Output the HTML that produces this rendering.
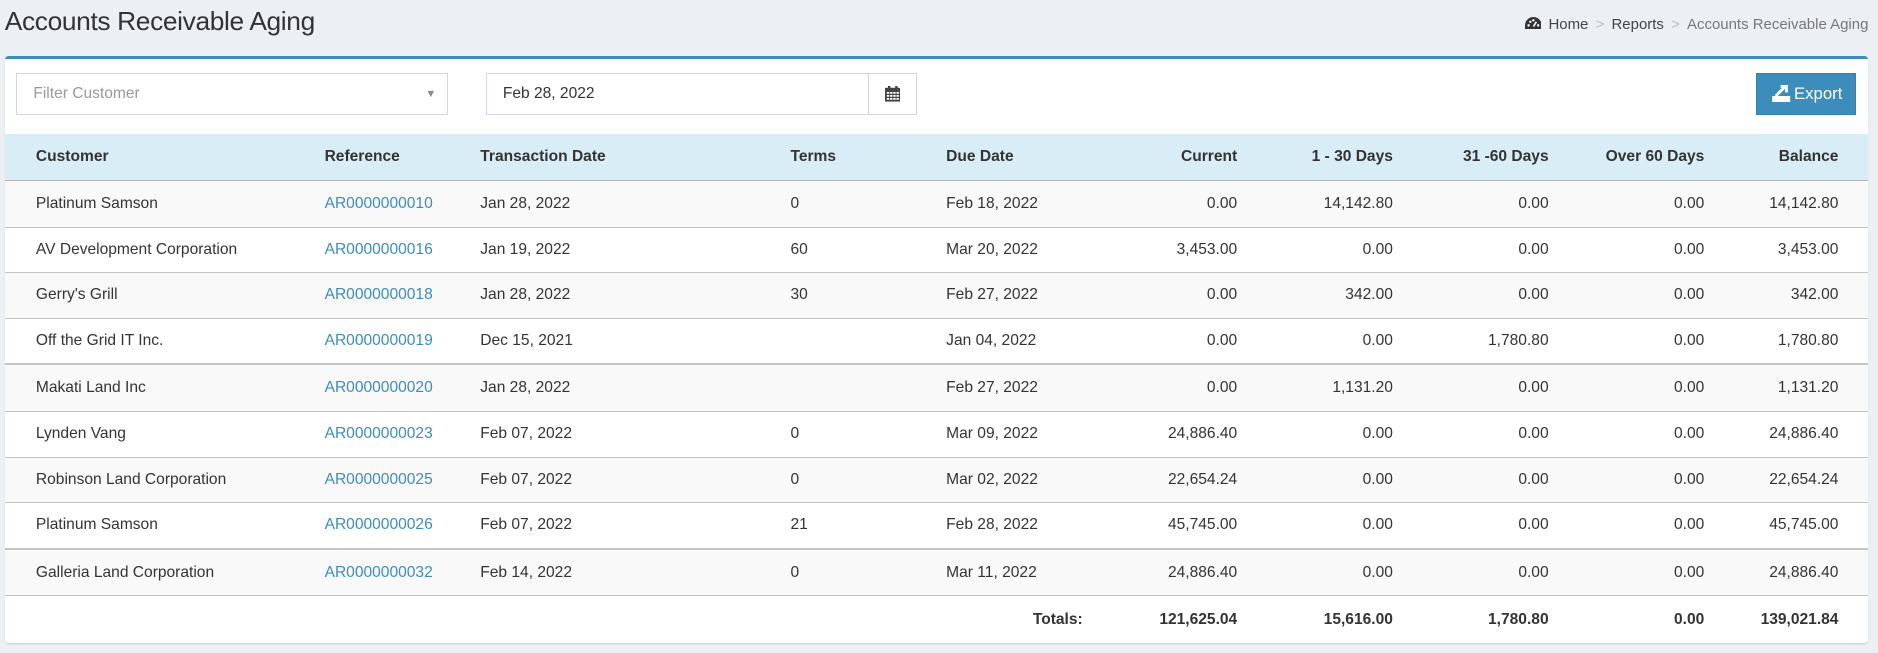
<!DOCTYPE html>
<html><head><meta charset="utf-8"><style>
html,body{margin:0;padding:0;background:#ecf0f5;width:1878px;height:653px;overflow:hidden}
#w{zoom:1.19770;position:relative;width:1568px;height:545px;font-family:"Liberation Sans",sans-serif;color:#333;font-size:13px}
.a{position:absolute;white-space:nowrap}
h1{position:absolute;left:4px;top:5px;margin:0;font-weight:normal;font-size:22px;color:#333;letter-spacing:-0.3px}
.bc{position:absolute;right:8px;top:13px;font-size:12.5px;color:#444}
.bc .s{color:#bbb;margin:0 6px}
.box{position:absolute;left:4px;top:47px;width:1556px;height:490px;background:#fff;border-top:3px solid #3c8dbc;border-radius:3px;box-sizing:border-box;box-shadow:0 1px 1px rgba(0,0,0,.1)}
.inp{position:absolute;border:1px solid #d2d6de;box-sizing:border-box;height:35px;background:#fff}
.row{position:absolute;left:4px;width:1556px}
.row span{position:absolute;top:50%;transform:translateY(-50%);white-space:nowrap}
.ln{color:#3c8dbc}
.b{font-weight:bold}
</style></head><body><div id="w">
<h1>Accounts Receivable Aging</h1>
<div class="bc"><svg width="14" height="11" viewBox="0 0 14 11" style="vertical-align:-1px;margin-right:6px"><path d="M7 0A7 7 0 0 0 0 7v3h14V7A7 7 0 0 0 7 0z" fill="#333"/><circle cx="3" cy="7" r="1" fill="#fff"/><circle cx="4.5" cy="4" r="1" fill="#fff"/><circle cx="7" cy="2.8" r="1" fill="#fff"/><circle cx="11" cy="7" r="1" fill="#fff"/><path d="M7 8L9.5 4" stroke="#fff" stroke-width="1.3"/></svg>Home<span class="s">&gt;</span>Reports<span class="s">&gt;</span><span style="color:#777">Accounts Receivable Aging</span></div>
<div class="box"></div>
<div class="inp" style="left:13px;top:61px;width:361px"><span class="a" style="left:14px;top:9px;color:#999">Filter Customer</span><span class="a" style="right:9px;top:12px;color:#888;font-size:9px">&#9660;</span></div>
<div class="inp" style="left:406px;top:61px;width:320px"><span class="a" style="left:13px;top:9px">Feb 28, 2022</span></div>
<div class="inp" style="left:725px;top:61px;width:41px;background:#fff"><svg class="a" style="left:13px;top:10px" width="13" height="13" viewBox="0 0 13 13"><rect x="0" y="1.5" width="13" height="11.5" fill="#444"/><rect x="2.5" y="0" width="2" height="3" fill="#444"/><rect x="8.5" y="0" width="2" height="3" fill="#444"/><g fill="#fff"><rect x="1.5" y="5" width="2" height="1.5"/><rect x="4.2" y="5" width="2" height="1.5"/><rect x="6.9" y="5" width="2" height="1.5"/><rect x="9.6" y="5" width="2" height="1.5"/><rect x="1.5" y="7.5" width="2" height="1.5"/><rect x="4.2" y="7.5" width="2" height="1.5"/><rect x="6.9" y="7.5" width="2" height="1.5"/><rect x="9.6" y="7.5" width="2" height="1.5"/><rect x="1.5" y="10" width="2" height="1.5"/><rect x="4.2" y="10" width="2" height="1.5"/><rect x="6.9" y="10" width="2" height="1.5"/><rect x="9.6" y="10" width="2" height="1.5"/></g></svg></div>
<div class="a" style="left:1466px;top:61px;width:84px;height:35px;background:#3c8dbc;border:1px solid #367fa9;box-sizing:border-box;color:#fff;font-size:14px"><svg class="a" style="left:12px;top:8px" width="17" height="16" viewBox="0 0 17 16"><path d="M1 10h15v5H1z" fill="#fff"/><path d="M4 10L11 3M8 2h5v5" stroke="#fff" stroke-width="2.4" fill="none"/></svg><span class="a" style="left:31px;top:8px">Export</span></div>
<div class="row" style="top:112px;height:38px;background:#d9edf7;border-bottom:2px solid #b4b4b4" id="hd"></div>
<div id="rows"></div>
<script>
var hd=document.getElementById('hd');
function cells(v,bold){var L=[26,267,397,656,786],R=[527,397,267,137,25],h='';
for(var i=0;i<5;i++)if(v[i])h+='<span style="left:'+L[i]+'px"'+(i==1&&!bold?' class="ln"':'')+'>'+v[i]+'</span>';
for(var j=0;j<5;j++)if(v[5+j])h+='<span style="right:'+R[j]+'px">'+v[5+j]+'</span>';return h;}
hd.innerHTML=cells(['Customer','Reference','Transaction Date','Terms','Due Date','Current','1 - 30 Days','31 -60 Days','Over 60 Days','Balance'],1);hd.className+=' b';
var d=[['Platinum Samson','AR0000000010','Jan 28, 2022','0','Feb 18, 2022','0.00','14,142.80','0.00','0.00','14,142.80'],
['AV Development Corporation','AR0000000016','Jan 19, 2022','60','Mar 20, 2022','3,453.00','0.00','0.00','0.00','3,453.00'],
["Gerry's Grill",'AR0000000018','Jan 28, 2022','30','Feb 27, 2022','0.00','342.00','0.00','0.00','342.00'],
['Off the Grid IT Inc.','AR0000000019','Dec 15, 2021','','Jan 04, 2022','0.00','0.00','1,780.80','0.00','1,780.80'],
['Makati Land Inc','AR0000000020','Jan 28, 2022','','Feb 27, 2022','0.00','1,131.20','0.00','0.00','1,131.20'],
['Lynden Vang','AR0000000023','Feb 07, 2022','0','Mar 09, 2022','24,886.40','0.00','0.00','0.00','24,886.40'],
['Robinson Land Corporation','AR0000000025','Feb 07, 2022','0','Mar 02, 2022','22,654.24','0.00','0.00','0.00','22,654.24'],
['Platinum Samson','AR0000000026','Feb 07, 2022','21','Feb 28, 2022','45,745.00','0.00','0.00','0.00','45,745.00'],
['Galleria Land Corporation','AR0000000032','Feb 14, 2022','0','Mar 11, 2022','24,886.40','0.00','0.00','0.00','24,886.40']];
var ys=[151,190,228,266,305,344,382,420,459,498],h='';
for(var k=0;k<9;k++){var thick=(k==3||k==7);h+='<div class="row" style="top:'+ys[k]+'px;height:'+(ys[k+1]-ys[k])+'px;box-sizing:border-box;background:'+(k%2==0?'#f9f9f9':'#fff')+';border-bottom:'+(thick?2:1)+'px solid #c4c4c4">'+cells(d[k])+'</div>';}
h+='<div class="row b" style="top:498px;height:39px">'+'<span style="right:656px">Totals:</span>'+cells(['','','','','','121,625.04','15,616.00','1,780.80','0.00','139,021.84'],1)+'</div>';
document.getElementById('rows').innerHTML=h;
</script>
</div></body></html>
